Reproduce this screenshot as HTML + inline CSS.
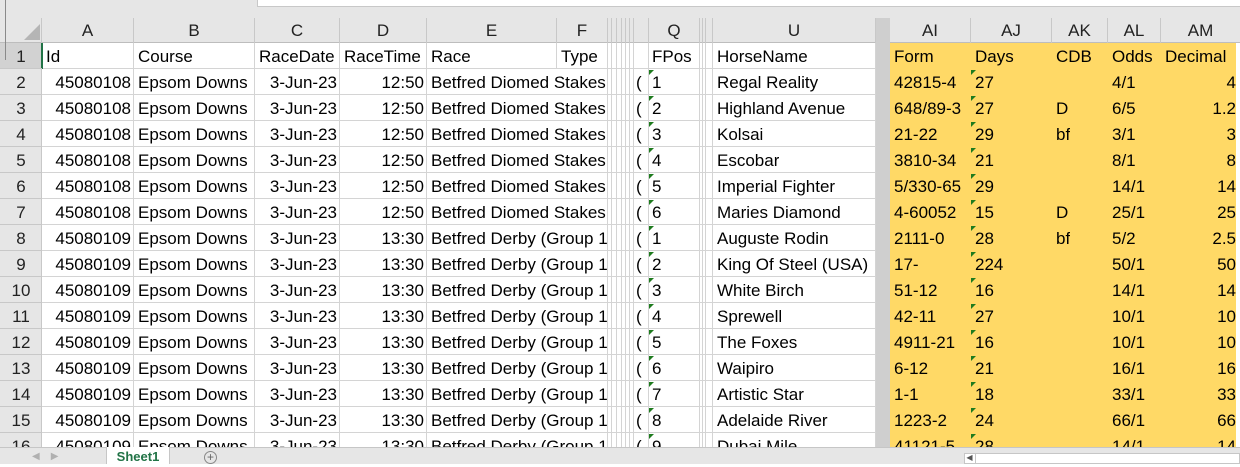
<!DOCTYPE html>
<html><head><meta charset="utf-8"><style>
*{margin:0;padding:0;box-sizing:border-box}
body{width:1240px;height:464px;overflow:hidden;background:#fff;position:relative;font-family:"Liberation Sans",Arial,sans-serif;font-size:17px;color:#000}
.abs{position:absolute}
.t{position:absolute;white-space:nowrap;line-height:28px;height:25px;overflow:hidden}
.h{position:absolute;top:18px;height:25px;line-height:25px;text-align:center;color:#222;font-size:17px;border-right:1px solid #c8c8c8;overflow:hidden;white-space:nowrap}
.vl{position:absolute;top:43px;height:405px;width:1px;background:#d4d4d4}
.rn{position:absolute;left:0;width:42px;text-align:center;line-height:27px;height:26px;color:#222;font-size:17px;border-bottom:1px solid #c8c8c8}
.tri{position:absolute;width:0;height:0;border-top:5px solid #1e7b1e;border-right:5px solid transparent}
.a{left:42px;width:89px;text-align:right}
.b{left:138px}
.c{left:255px;width:82px;text-align:right}
.d{left:340px;width:84px;text-align:right}
.e{left:428px;width:179px;padding-left:3px;background:#fff}
.p{left:636px}
.q{left:652px}
.u{left:717px}
.ai{left:894px}
.aj{left:975px}
.ak{left:1056px}
.al{left:1112px}
.am{left:1161px;width:75px;text-align:right}
</style></head><body>
<div class="abs" style="left:0;top:0;width:1240px;height:18px;background:#e6e6e6"></div>
<div class="abs" style="left:257px;top:0;width:983px;height:7px;background:#fff;border-bottom:1px solid #c8c8c8;border-left:1px solid #c8c8c8"></div>
<div class="abs" style="left:42px;top:43px;width:834px;height:405px;background:repeating-linear-gradient(to bottom,transparent 0,transparent 25px,#d4d4d4 25px,#d4d4d4 26px)"></div>
<div class="vl" style="left:133px"></div><div class="vl" style="left:254px"></div><div class="vl" style="left:339px"></div><div class="vl" style="left:426px"></div><div class="vl" style="left:556px"></div><div class="vl" style="left:607px"></div><div class="vl" style="left:611px"></div><div class="vl" style="left:616px"></div><div class="vl" style="left:621px"></div><div class="vl" style="left:625px"></div><div class="vl" style="left:629px"></div><div class="vl" style="left:633px"></div><div class="vl" style="left:648px"></div><div class="vl" style="left:699px"></div><div class="vl" style="left:702px"></div><div class="vl" style="left:705px"></div><div class="vl" style="left:712px"></div><div class="vl" style="left:875px"></div>
<div class="abs" style="left:0;top:18px;width:1240px;height:25px;background:#e6e6e6;border-bottom:1px solid #bdbdbd"></div>
<div class="abs" style="left:0;top:18px;width:42px;height:25px;border-right:1px solid #c8c8c8"></div>
<div class="abs" style="left:24px;top:24px;width:0;height:0;border-bottom:16px solid #b5b5b5;border-left:16px solid transparent"></div>
<div class="h" style="left:42px;width:92px">A</div>
<div class="h" style="left:134px;width:121px">B</div>
<div class="h" style="left:255px;width:85px">C</div>
<div class="h" style="left:340px;width:87px">D</div>
<div class="h" style="left:427px;width:130px">E</div>
<div class="h" style="left:557px;width:51px">F</div>
<div class="h" style="left:608px;width:4px;border-right:1px solid #c8c8c8"></div>
<div class="h" style="left:612px;width:5px"></div><div class="h" style="left:617px;width:5px"></div><div class="h" style="left:622px;width:4px"></div><div class="h" style="left:626px;width:4px"></div><div class="h" style="left:630px;width:4px"></div><div class="h" style="left:634px;width:15px"></div>
<div class="h" style="left:649px;width:51px">Q</div>
<div class="h" style="left:700px;width:3px"></div><div class="h" style="left:703px;width:3px"></div><div class="h" style="left:706px;width:7px"></div>
<div class="h" style="left:713px;width:163px">U</div>
<div class="abs" style="left:876px;top:18px;width:14px;height:430px;background:#cfcfcf"></div>
<div class="h" style="left:890px;width:81px">AI</div>
<div class="h" style="left:971px;width:81px">AJ</div>
<div class="h" style="left:1052px;width:56px">AK</div>
<div class="h" style="left:1108px;width:53px">AL</div>
<div class="h" style="left:1161px;width:79px;border-right:none">AM</div>
<div class="abs" style="left:0;top:43px;width:42px;height:405px;background:#e6e6e6;border-right:1px solid #c8c8c8"></div>
<div class="abs" style="left:0;top:43px;width:42px;height:26px;background:#d2d2d2"></div>
<div class="abs" style="left:41px;top:43px;width:2px;height:26px;background:#217346"></div>
<div class="abs" style="left:5px;top:0;width:1px;height:60px;background:#8a8a8a"></div>
<div class="abs" style="left:890px;top:43px;width:346px;height:405px;background:#ffd966"></div>
<div class="rn" style="top:43px">1</div><div class="rn" style="top:69px">2</div><div class="rn" style="top:95px">3</div><div class="rn" style="top:121px">4</div><div class="rn" style="top:147px">5</div><div class="rn" style="top:173px">6</div><div class="rn" style="top:199px">7</div><div class="rn" style="top:225px">8</div><div class="rn" style="top:251px">9</div><div class="rn" style="top:277px">10</div><div class="rn" style="top:303px">11</div><div class="rn" style="top:329px">12</div><div class="rn" style="top:355px">13</div><div class="rn" style="top:381px">14</div><div class="rn" style="top:407px">15</div><div class="rn" style="top:433px;height:15px;overflow:hidden">16</div>

<div class="t" style="top:43px;left:46px">Id</div>
<div class="t" style="top:43px;left:138px">Course</div>
<div class="t" style="top:43px;left:259px">RaceDate</div>
<div class="t" style="top:43px;left:344px">RaceTime</div>
<div class="t" style="top:43px;left:431px">Race</div>
<div class="t" style="top:43px;left:561px">Type</div>
<div class="t" style="top:43px;left:652px">FPos</div>
<div class="t" style="top:43px;left:717px">HorseName</div>
<div class="t" style="top:43px;left:894px">Form</div>
<div class="t" style="top:43px;left:975px">Days</div>
<div class="t" style="top:43px;left:1056px">CDB</div>
<div class="t" style="top:43px;left:1112px">Odds</div>
<div class="t" style="top:43px;left:1165px">Decimal</div>

<div style="position:absolute;left:0;top:69px;width:1240px;height:378px;overflow:hidden">
<div style="position:absolute;left:0;top:-69px;width:1240px;height:447px">
<div class="t a" style="top:69px">45080108</div><div class="t b" style="top:69px">Epsom Downs</div><div class="t c" style="top:69px">3-Jun-23</div><div class="t d" style="top:69px">12:50</div><div class="t e" style="top:69px">Betfred Diomed Stakes</div><div class="t p" style="top:69px">(</div><div class="tri" style="left:649px;top:70px"></div><div class="t q" style="top:69px">1</div><div class="t u" style="top:69px">Regal Reality</div><div class="t ai" style="top:69px">42815-4</div><div class="tri" style="left:971px;top:70px"></div><div class="t aj" style="top:69px">27</div><div class="t al" style="top:69px">4/1</div><div class="t am" style="top:69px">4</div>
<div class="t a" style="top:95px">45080108</div><div class="t b" style="top:95px">Epsom Downs</div><div class="t c" style="top:95px">3-Jun-23</div><div class="t d" style="top:95px">12:50</div><div class="t e" style="top:95px">Betfred Diomed Stakes</div><div class="t p" style="top:95px">(</div><div class="tri" style="left:649px;top:96px"></div><div class="t q" style="top:95px">2</div><div class="t u" style="top:95px">Highland Avenue</div><div class="t ai" style="top:95px">648/89-3</div><div class="tri" style="left:971px;top:96px"></div><div class="t aj" style="top:95px">27</div><div class="t ak" style="top:95px">D</div><div class="t al" style="top:95px">6/5</div><div class="t am" style="top:95px">1.2</div>
<div class="t a" style="top:121px">45080108</div><div class="t b" style="top:121px">Epsom Downs</div><div class="t c" style="top:121px">3-Jun-23</div><div class="t d" style="top:121px">12:50</div><div class="t e" style="top:121px">Betfred Diomed Stakes</div><div class="t p" style="top:121px">(</div><div class="tri" style="left:649px;top:122px"></div><div class="t q" style="top:121px">3</div><div class="t u" style="top:121px">Kolsai</div><div class="t ai" style="top:121px">21-22</div><div class="tri" style="left:971px;top:122px"></div><div class="t aj" style="top:121px">29</div><div class="t ak" style="top:121px">bf</div><div class="t al" style="top:121px">3/1</div><div class="t am" style="top:121px">3</div>
<div class="t a" style="top:147px">45080108</div><div class="t b" style="top:147px">Epsom Downs</div><div class="t c" style="top:147px">3-Jun-23</div><div class="t d" style="top:147px">12:50</div><div class="t e" style="top:147px">Betfred Diomed Stakes</div><div class="t p" style="top:147px">(</div><div class="tri" style="left:649px;top:148px"></div><div class="t q" style="top:147px">4</div><div class="t u" style="top:147px">Escobar</div><div class="t ai" style="top:147px">3810-34</div><div class="tri" style="left:971px;top:148px"></div><div class="t aj" style="top:147px">21</div><div class="t al" style="top:147px">8/1</div><div class="t am" style="top:147px">8</div>
<div class="t a" style="top:173px">45080108</div><div class="t b" style="top:173px">Epsom Downs</div><div class="t c" style="top:173px">3-Jun-23</div><div class="t d" style="top:173px">12:50</div><div class="t e" style="top:173px">Betfred Diomed Stakes</div><div class="t p" style="top:173px">(</div><div class="tri" style="left:649px;top:174px"></div><div class="t q" style="top:173px">5</div><div class="t u" style="top:173px">Imperial Fighter</div><div class="t ai" style="top:173px">5/330-65</div><div class="tri" style="left:971px;top:174px"></div><div class="t aj" style="top:173px">29</div><div class="t al" style="top:173px">14/1</div><div class="t am" style="top:173px">14</div>
<div class="t a" style="top:199px">45080108</div><div class="t b" style="top:199px">Epsom Downs</div><div class="t c" style="top:199px">3-Jun-23</div><div class="t d" style="top:199px">12:50</div><div class="t e" style="top:199px">Betfred Diomed Stakes</div><div class="t p" style="top:199px">(</div><div class="tri" style="left:649px;top:200px"></div><div class="t q" style="top:199px">6</div><div class="t u" style="top:199px">Maries Diamond</div><div class="t ai" style="top:199px">4-60052</div><div class="tri" style="left:971px;top:200px"></div><div class="t aj" style="top:199px">15</div><div class="t ak" style="top:199px">D</div><div class="t al" style="top:199px">25/1</div><div class="t am" style="top:199px">25</div>
<div class="t a" style="top:225px">45080109</div><div class="t b" style="top:225px">Epsom Downs</div><div class="t c" style="top:225px">3-Jun-23</div><div class="t d" style="top:225px">13:30</div><div class="t e" style="top:225px">Betfred Derby (Group 1</div><div class="t p" style="top:225px">(</div><div class="tri" style="left:649px;top:226px"></div><div class="t q" style="top:225px">1</div><div class="t u" style="top:225px">Auguste Rodin</div><div class="t ai" style="top:225px">2111-0</div><div class="tri" style="left:971px;top:226px"></div><div class="t aj" style="top:225px">28</div><div class="t ak" style="top:225px">bf</div><div class="t al" style="top:225px">5/2</div><div class="t am" style="top:225px">2.5</div>
<div class="t a" style="top:251px">45080109</div><div class="t b" style="top:251px">Epsom Downs</div><div class="t c" style="top:251px">3-Jun-23</div><div class="t d" style="top:251px">13:30</div><div class="t e" style="top:251px">Betfred Derby (Group 1</div><div class="t p" style="top:251px">(</div><div class="tri" style="left:649px;top:252px"></div><div class="t q" style="top:251px">2</div><div class="t u" style="top:251px">King Of Steel (USA)</div><div class="t ai" style="top:251px">17-</div><div class="tri" style="left:971px;top:252px"></div><div class="t aj" style="top:251px">224</div><div class="t al" style="top:251px">50/1</div><div class="t am" style="top:251px">50</div>
<div class="t a" style="top:277px">45080109</div><div class="t b" style="top:277px">Epsom Downs</div><div class="t c" style="top:277px">3-Jun-23</div><div class="t d" style="top:277px">13:30</div><div class="t e" style="top:277px">Betfred Derby (Group 1</div><div class="t p" style="top:277px">(</div><div class="tri" style="left:649px;top:278px"></div><div class="t q" style="top:277px">3</div><div class="t u" style="top:277px">White Birch</div><div class="t ai" style="top:277px">51-12</div><div class="tri" style="left:971px;top:278px"></div><div class="t aj" style="top:277px">16</div><div class="t al" style="top:277px">14/1</div><div class="t am" style="top:277px">14</div>
<div class="t a" style="top:303px">45080109</div><div class="t b" style="top:303px">Epsom Downs</div><div class="t c" style="top:303px">3-Jun-23</div><div class="t d" style="top:303px">13:30</div><div class="t e" style="top:303px">Betfred Derby (Group 1</div><div class="t p" style="top:303px">(</div><div class="tri" style="left:649px;top:304px"></div><div class="t q" style="top:303px">4</div><div class="t u" style="top:303px">Sprewell</div><div class="t ai" style="top:303px">42-11</div><div class="tri" style="left:971px;top:304px"></div><div class="t aj" style="top:303px">27</div><div class="t al" style="top:303px">10/1</div><div class="t am" style="top:303px">10</div>
<div class="t a" style="top:329px">45080109</div><div class="t b" style="top:329px">Epsom Downs</div><div class="t c" style="top:329px">3-Jun-23</div><div class="t d" style="top:329px">13:30</div><div class="t e" style="top:329px">Betfred Derby (Group 1</div><div class="t p" style="top:329px">(</div><div class="tri" style="left:649px;top:330px"></div><div class="t q" style="top:329px">5</div><div class="t u" style="top:329px">The Foxes</div><div class="t ai" style="top:329px">4911-21</div><div class="tri" style="left:971px;top:330px"></div><div class="t aj" style="top:329px">16</div><div class="t al" style="top:329px">10/1</div><div class="t am" style="top:329px">10</div>
<div class="t a" style="top:355px">45080109</div><div class="t b" style="top:355px">Epsom Downs</div><div class="t c" style="top:355px">3-Jun-23</div><div class="t d" style="top:355px">13:30</div><div class="t e" style="top:355px">Betfred Derby (Group 1</div><div class="t p" style="top:355px">(</div><div class="tri" style="left:649px;top:356px"></div><div class="t q" style="top:355px">6</div><div class="t u" style="top:355px">Waipiro</div><div class="t ai" style="top:355px">6-12</div><div class="tri" style="left:971px;top:356px"></div><div class="t aj" style="top:355px">21</div><div class="t al" style="top:355px">16/1</div><div class="t am" style="top:355px">16</div>
<div class="t a" style="top:381px">45080109</div><div class="t b" style="top:381px">Epsom Downs</div><div class="t c" style="top:381px">3-Jun-23</div><div class="t d" style="top:381px">13:30</div><div class="t e" style="top:381px">Betfred Derby (Group 1</div><div class="t p" style="top:381px">(</div><div class="tri" style="left:649px;top:382px"></div><div class="t q" style="top:381px">7</div><div class="t u" style="top:381px">Artistic Star</div><div class="t ai" style="top:381px">1-1</div><div class="tri" style="left:971px;top:382px"></div><div class="t aj" style="top:381px">18</div><div class="t al" style="top:381px">33/1</div><div class="t am" style="top:381px">33</div>
<div class="t a" style="top:407px">45080109</div><div class="t b" style="top:407px">Epsom Downs</div><div class="t c" style="top:407px">3-Jun-23</div><div class="t d" style="top:407px">13:30</div><div class="t e" style="top:407px">Betfred Derby (Group 1</div><div class="t p" style="top:407px">(</div><div class="tri" style="left:649px;top:408px"></div><div class="t q" style="top:407px">8</div><div class="t u" style="top:407px">Adelaide River</div><div class="t ai" style="top:407px">1223-2</div><div class="tri" style="left:971px;top:408px"></div><div class="t aj" style="top:407px">24</div><div class="t al" style="top:407px">66/1</div><div class="t am" style="top:407px">66</div>
<div class="t a" style="top:433px">45080109</div><div class="t b" style="top:433px">Epsom Downs</div><div class="t c" style="top:433px">3-Jun-23</div><div class="t d" style="top:433px">13:30</div><div class="t e" style="top:433px">Betfred Derby (Group 1</div><div class="t p" style="top:433px">(</div><div class="tri" style="left:649px;top:434px"></div><div class="t q" style="top:433px">9</div><div class="t u" style="top:433px">Dubai Mile</div><div class="t ai" style="top:433px">41121-5</div><div class="tri" style="left:971px;top:434px"></div><div class="t aj" style="top:433px">28</div><div class="t al" style="top:433px">14/1</div><div class="t am" style="top:433px">14</div>
</div></div>
<div class="abs" style="left:0;top:447px;width:1240px;height:17px;background:#e6e6e6;border-top:1px solid #c6c6c6"></div>
<div class="abs" style="left:32px;top:451px;color:#b0b0b0;font-size:10px">&#9664;&nbsp;&nbsp;&nbsp;&nbsp;&#9654;</div>
<div class="abs" style="left:106px;top:447px;width:64px;height:17px;background:#fff;border-left:1px solid #c6c6c6;border-right:1px solid #c6c6c6;color:#217346;font-weight:bold;font-size:13px;text-align:center;line-height:20px">Sheet1</div>
<div class="abs" style="left:204px;top:451px;width:13px;height:13px;border:1px solid #888;border-radius:50%;color:#666;font-size:12px;line-height:11px;text-align:center">+</div>
<div class="abs" style="left:964px;top:453px;width:276px;height:11px;background:#fff;border:1px solid #c6c6c6"></div>
<div class="abs" style="left:964px;top:453px;width:12px;height:11px;border-right:1px solid #c6c6c6;font-size:8px;color:#555;text-align:center">&#9664;</div>
</body></html>
